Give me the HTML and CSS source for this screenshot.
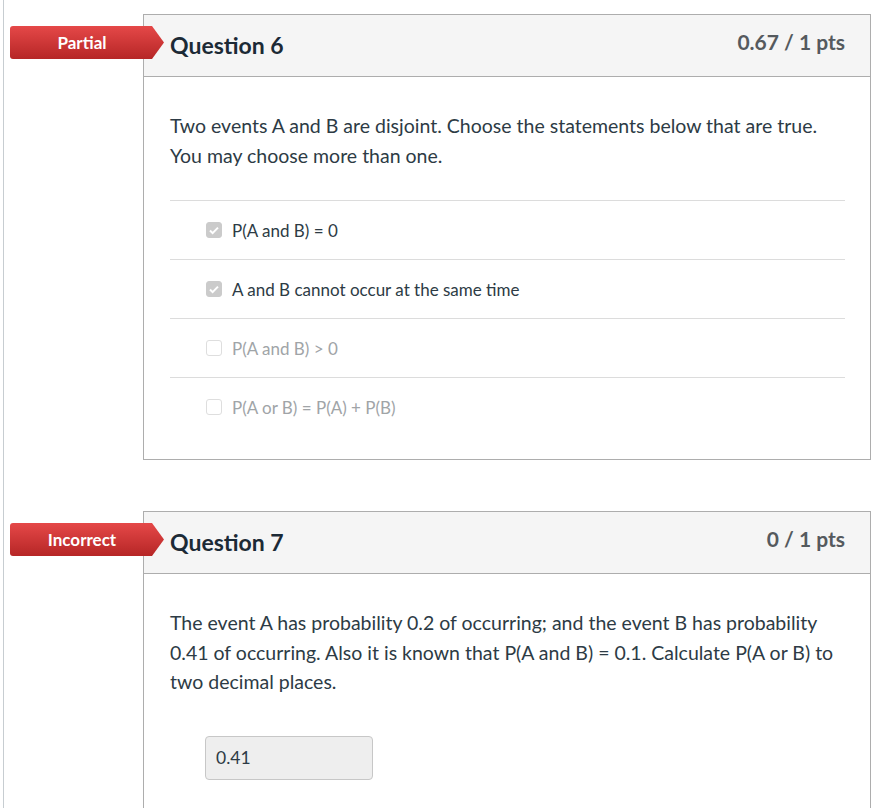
FILE: index.html
```html
<!DOCTYPE html>
<html lang="en">
  <head>
    <meta charset="UTF-8" />
    <meta name="viewport" content="width=device-width, initial-scale=1.0" />
    <title>Quiz Results</title>
    <link rel="stylesheet" href="styles.css">
  </head>
  <body>
    <div class="page">
      <!-- Question 6 -->
      <div class="question">
        <span class="badge">Partial</span>
        <div class="question-header">
          <h2 class="question-title">Question 6</h2>
          <span class="points">0.67 / 1 pts</span>
        </div>
        <div class="question-body">
          <p class="question-text">Two events A and B are disjoint. Choose the statements below that are true. You may choose more than one.</p>
          <div class="answers">
            <div class="answer selected">
              <span class="checkbox"><svg viewBox="0 0 16 16" width="16" height="16"><path d="M4 8.5l2.6 2.6L12 5.6" fill="none" stroke="#fff" stroke-width="2"/></svg></span>
              <span class="answer-text">P(A and B) = 0</span>
            </div>
            <div class="answer selected">
              <span class="checkbox"><svg viewBox="0 0 16 16" width="16" height="16"><path d="M4 8.5l2.6 2.6L12 5.6" fill="none" stroke="#fff" stroke-width="2"/></svg></span>
              <span class="answer-text">A and B cannot occur at the same time</span>
            </div>
            <div class="answer">
              <span class="checkbox"></span>
              <span class="answer-text">P(A and B) &gt; 0</span>
            </div>
            <div class="answer">
              <span class="checkbox"></span>
              <span class="answer-text">P(A or B) = P(A) + P(B)</span>
            </div>
          </div>
        </div>
      </div>

      <!-- Question 7 -->
      <div class="question">
        <span class="badge">Incorrect</span>
        <div class="question-header">
          <h2 class="question-title">Question 7</h2>
          <span class="points">0 / 1 pts</span>
        </div>
        <div class="question-body">
          <p class="question-text">The event A has probability 0.2 of occurring; and the event B has probability 0.41 of occurring. Also it is known that P(A and B) = 0.1. Calculate P(A or B) to two decimal places.</p>
          <div class="numeric-answer">
            <input type="text" value="0.41" readonly>
          </div>
        </div>
      </div>
    </div>
  </body>
</html>
```

FILE: styles.css
```css
/* Page base */
body {
  margin: 0;
  font-family: Lato, "Noto Sans", sans-serif;
  color: #2d3b45;
  background: #fff;
}

.page {
  margin-left: 3px;
  border-left: 1px solid #c7cdd1;
  padding: 14px 16px 0 139px;
}

/* Question card */
.question {
  position: relative;
  border: 1px solid #adadad;
  margin-bottom: 51px;
}

.question-header {
  display: flex;
  justify-content: space-between;
  align-items: flex-start;
  height: 62px;
  box-sizing: border-box;
  padding: 0 25px 0 26px;
  background-color: #f5f5f5;
  border-bottom: 1px solid #adadad;
}

.question-title {
  margin: 16px 0 0;
  font-size: 23px;
  font-weight: 700;
  color: #1c2a36;
}

.points {
  margin-top: 14px;
  font-size: 21px;
  font-weight: 700;
  color: #555a5e;
}

/* Status badge sitting over the left edge */
.badge {
  position: absolute;
  left: -134px;
  top: 11px;
  width: 154px;
  height: 33px;
  padding-right: 10px;
  box-sizing: border-box;
  display: flex;
  align-items: center;
  justify-content: center;
  color: #fff;
  font-size: 17px;
  font-weight: 700;
  background: linear-gradient(#e54848, #b62626);
  border-radius: 3px 0 0 3px;
  clip-path: polygon(0 0, calc(100% - 12px) 0, 100% 50%, calc(100% - 12px) 100%, 0 100%);
}

.question-body {
  padding: 34px 25px 23px 26px;
}

.question-text {
  margin: 0;
  font-size: 19.5px;
  line-height: 29.5px;
}

/* Answers */
.answers {
  margin-top: 30px;
}

.answer {
  display: flex;
  align-items: center;
  height: 58px;
  border-top: 1px solid #dcdcdc;
  padding-left: 36px;
  font-size: 17px;
  color: #a0a4a7;
}

.answer.selected {
  color: #2d3b45;
}

.checkbox {
  width: 16px;
  height: 16px;
  box-sizing: border-box;
  border: 1px solid #dedede;
  border-radius: 3px;
  margin-right: 10px;
  display: flex;
}

.answer.selected .checkbox {
  background: #cbcbcb;
  border-color: #cbcbcb;
}

.checkbox svg {
  margin: -1px;
}

/* Numeric answer */
.numeric-answer {
  margin-top: 39px;
  padding-left: 35px;
  padding-bottom: 30px;
}

.numeric-answer input {
  width: 168px;
  height: 44px;
  box-sizing: border-box;
  padding: 0 10px;
  font-family: inherit;
  font-size: 17.5px;
  color: #2d3b45;
  background: #eee;
  border: 1px solid #c7c7c7;
  border-radius: 4px;
}
```
